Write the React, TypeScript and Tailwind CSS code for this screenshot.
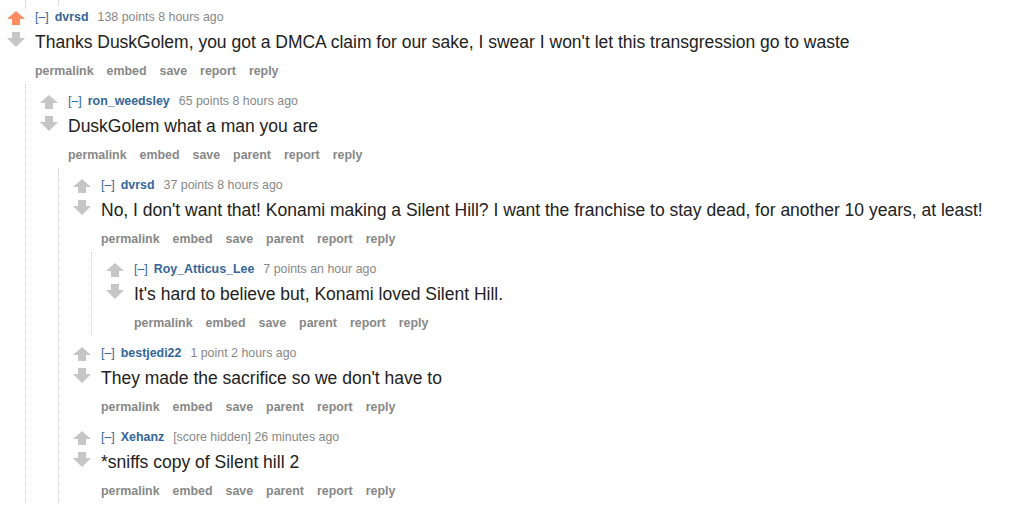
import React from "react";

type C = {
  author: string;
  score: string;
  time: string;
  body: string;
  parent?: boolean;
  up?: boolean;
  children?: C[];
};

const data: C[] = [
  {
    author: "dvrsd",
    score: "138 points",
    time: "8 hours ago",
    body: "Thanks DuskGolem, you got a DMCA claim for our sake, I swear I won't let this transgression go to waste",
    up: true,
    children: [
      {
        author: "ron_weedsley",
        score: "65 points",
        time: "8 hours ago",
        body: "DuskGolem what a man you are",
        parent: true,
        children: [
          {
            author: "dvrsd",
            score: "37 points",
            time: "8 hours ago",
            body: "No, I don't want that! Konami making a Silent Hill? I want the franchise to stay dead, for another 10 years, at least!",
            parent: true,
            children: [
              {
                author: "Roy_Atticus_Lee",
                score: "7 points",
                time: "an hour ago",
                body: "It's hard to believe but, Konami loved Silent Hill.",
                parent: true,
              },
            ],
          },
          {
            author: "bestjedi22",
            score: "1 point",
            time: "2 hours ago",
            body: "They made the sacrifice so we don't have to",
            parent: true,
          },
          {
            author: "Xehanz",
            score: "[score hidden]",
            time: "26 minutes ago",
            body: "*sniffs copy of Silent hill 2",
            parent: true,
          },
        ],
      },
    ],
  },
];

function Arrows({ up }: { up?: boolean }) {
  return (
    <div className="w-[35px] shrink-0 flex flex-col items-start pl-[7px] pt-[11px]">
      <svg width="18" height="14" viewBox="0 0 18 14" className="block">
        <polygon points="9,0 18,8 13,8 13,14 5,14 5,8 0,8" fill={up ? "#ff8b60" : "#c6c6c6"} />
      </svg>
      <svg width="18" height="15" viewBox="0 0 18 15" className="block mt-[7px]">
        <polygon points="5,0 13,0 13,6 18,6 9,15 0,6 5,6" fill="#c6c6c6" />
      </svg>
    </div>
  );
}

function Comment({ c }: { c: C }) {
  const buttons = c.parent
    ? ["permalink", "embed", "save", "parent", "report", "reply"]
    : ["permalink", "embed", "save", "report", "reply"];
  return (
    <div>
      <div className="flex h-[84px]">
        <Arrows up={c.up} />
        <div className="pt-[9px]">
          <div className="flex items-center h-[16px] text-[12.4px] leading-[16px] whitespace-nowrap">
            <span className="text-[#369]">[–]</span>
            <span className="ml-[6px] font-bold text-[#369]">{c.author}</span>
            <span className="ml-[9px] text-[#888]">{c.score} {c.time}</span>
          </div>
          <div className="mt-[6px] h-[22px] text-[17.5px] leading-[22px] text-[#222] whitespace-nowrap">
            {c.body}
          </div>
          <div className="mt-[10px] flex gap-[13px] h-[16px] text-[12.4px] leading-[16px] font-bold text-[#888]">
            {buttons.map((b) => (
              <span key={b}>{b}</span>
            ))}
          </div>
        </div>
      </div>
      {c.children && c.children.length > 0 && (
        <div className="ml-[25px] border-l border-dotted border-[#cfd0dc] pl-[7px]">
          {c.children.map((ch, i) => (
            <Comment key={i} c={ch} />
          ))}
        </div>
      )}
    </div>
  );
}

export default function App() {
  return (
    <div
      className="relative w-[1012px] h-[507px] bg-white overflow-hidden"
      style={{ fontFamily: '"Liberation Sans", Arial, sans-serif' }}
    >
      <div className="absolute left-[25px] top-0 h-[10px] border-l border-dotted border-[#cfd0dc]" />
      <div className="absolute left-[58px] top-0 h-[6px] border-l border-dotted border-[#cfd0dc]" />
      {data.map((c, i) => (
        <Comment key={i} c={c} />
      ))}
    </div>
  );
}
